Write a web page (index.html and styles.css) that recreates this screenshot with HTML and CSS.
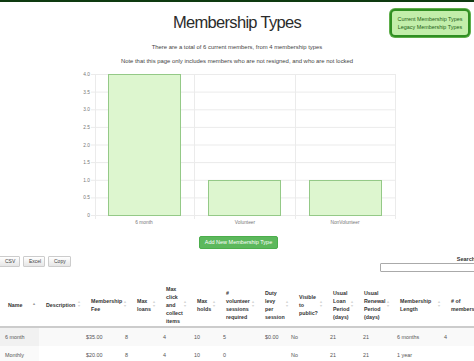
FILE: index.html
```html
<!DOCTYPE html>
<html lang="en">
<head>
    <meta charset="UTF-8">
    <title>Membership Types</title>
    <link rel="stylesheet" href="styles.css">
</head>
<body>
<div class="topbar"></div>

<div class="header">
    <div></div>
    <h1>Membership Types</h1>
    <div class="typebox">
        <a href="#">Current Membership Types</a>
        <a href="#">Legacy Membership Types</a>
    </div>
</div>

<p class="info first">There are a total of 6 current members, from 4 membership types</p>
<p class="info">Note that this page only includes members who are not resigned, and who are not locked</p>

<div class="chart">
    <svg width="474" height="162" viewBox="0 0 474 162">
        <g stroke="#ebebeb" stroke-width="1">
            <line x1="91" y1="6.5" x2="396" y2="6.5"/>
            <line x1="91" y1="24.1" x2="396" y2="24.1"/>
            <line x1="91" y1="41.8" x2="396" y2="41.8"/>
            <line x1="91" y1="59.4" x2="396" y2="59.4"/>
            <line x1="91" y1="77" x2="396" y2="77"/>
            <line x1="91" y1="94.6" x2="396" y2="94.6"/>
            <line x1="91" y1="112.3" x2="396" y2="112.3"/>
            <line x1="91" y1="129.9" x2="396" y2="129.9"/>
            <line x1="91" y1="147.5" x2="396" y2="147.5"/>
            <line x1="95.5" y1="6" x2="95.5" y2="151"/>
            <line x1="194.5" y1="6" x2="194.5" y2="151"/>
            <line x1="295.5" y1="6" x2="295.5" y2="151"/>
            <line x1="395.5" y1="6" x2="395.5" y2="151"/>
        </g>
        <g fill="#ddf6cf" stroke="#94c987" stroke-width="1">
            <rect x="108.5" y="6.5" width="72" height="141"/>
            <rect x="208.5" y="112.5" width="72" height="35"/>
            <rect x="309.5" y="112.5" width="72" height="35"/>
        </g>
        <g class="axis" text-anchor="end">
            <text x="90" y="8">4.0</text>
            <text x="90" y="25.6">3.5</text>
            <text x="90" y="43.3">3.0</text>
            <text x="90" y="60.9">2.5</text>
            <text x="90" y="78.5">2.0</text>
            <text x="90" y="96.1">1.5</text>
            <text x="90" y="113.8">1.0</text>
            <text x="90" y="131.4">0.5</text>
            <text x="90" y="149">0</text>
        </g>
        <g class="axis" text-anchor="middle">
            <text x="144" y="156">6 month</text>
            <text x="245" y="156">Volunteer</text>
            <text x="345" y="156">NonVolunteer</text>
        </g>
    </svg>
</div>

<div class="addrow">
    <a href="#" class="btn-add">Add New Membership Type</a>
</div>

<div class="datatable">
    <div class="controls">
        <div class="exports">
            <span class="dt-btn">CSV</span>
            <span class="dt-btn">Excel</span>
            <span class="dt-btn">Copy</span>
        </div>
        <div class="search">
            <span>Search:</span>
            <input type="text">
        </div>
    </div>

    <table class="head">
        <colgroup>
            <col style="width:38px"><col style="width:45px"><col style="width:46px"><col style="width:29px">
            <col style="width:31px"><col style="width:29px"><col style="width:39px"><col style="width:34px">
            <col style="width:34px"><col style="width:31px"><col style="width:36px"><col style="width:51px">
            <col style="width:57px">
        </colgroup>
        <tr>
            <th class="asc">Name</th>
            <th>Description</th>
            <th>Membership<br>Fee</th>
            <th>Max<br>loans</th>
            <th>Max<br>click<br>and<br>collect<br>items</th>
            <th>Max<br>holds</th>
            <th>#<br>volunteer<br>sessions<br>required</th>
            <th>Duty<br>levy<br>per<br>session</th>
            <th>Visible<br>to<br>public?</th>
            <th>Usual<br>Loan<br>Period<br>(days)</th>
            <th>Usual<br>Renewal<br>Period<br>(days)</th>
            <th>Membership<br>Length</th>
            <th class="nosort"># of<br>members</th>
        </tr>
    </table>

    <table class="body">
        <colgroup>
            <col style="width:39px"><col style="width:42px"><col style="width:39px"><col style="width:38px">
            <col style="width:31px"><col style="width:29px"><col style="width:42px"><col style="width:26px">
            <col style="width:39px"><col style="width:33px"><col style="width:34px"><col style="width:47px">
            <col style="width:61px">
        </colgroup>
        <tr class="odd">
            <td class="sorted">6 month</td><td></td><td>$35.00</td><td>8</td><td>4</td><td>10</td><td>5</td>
            <td>$0.00</td><td>No</td><td>21</td><td>21</td><td>6 months</td><td>4</td>
        </tr>
        <tr class="even">
            <td class="sorted">Monthly</td><td></td><td>$20.00</td><td>8</td><td>4</td><td>10</td><td>0</td>
            <td></td><td>No</td><td>21</td><td>21</td><td>1 year</td><td></td>
        </tr>
    </table>
</div>
</body>
</html>
```

FILE: styles.css
```css
* {
    margin: 0;
    padding: 0;
    box-sizing: border-box;
}

html, body {
    overflow: hidden;
}

body {
    font-family: "Liberation Sans", Arial, sans-serif;
    color: #333;
    background: #fff;
    width: 474px;
}

a {
    text-decoration: none;
}

.topbar {
    height: 2px;
    background: #0e3a10;
}

.header {
    display: grid;
    grid-template-columns: 1fr auto 1fr;
    height: 40px;
    align-items: center;
}

.header h1 {
    font-size: 16.5px;
    font-weight: normal;
    letter-spacing: -0.7px;
    color: #2b2b2b;
}

.typebox {
    justify-self: end;
    align-self: start;
    margin: 7px 4px 0 0;
    width: 80px;
    height: 28px;
    border: 2px solid #2f8f22;
    border-radius: 5px;
    background: #c2eeaa;
    box-shadow: 0 0 0 1px #5fae4b;
    display: flex;
    flex-direction: column;
    align-items: center;
    justify-content: center;
    font-size: 5.4px;
    line-height: 8px;
}

.typebox a {
    color: #1d5e16;
}

.info {
    text-align: center;
    font-size: 5.9px;
    line-height: 10px;
    color: #444;
}

.info + .info {
    margin-top: 4px;
}

.chart {
    margin-top: 2px;
    height: 162px;
}

.chart svg {
    display: block;
}

.axis {
    font-family: "Liberation Sans", Arial, sans-serif;
    font-size: 4.8px;
    fill: #777;
}

.addrow {
    text-align: center;
    margin-top: 0;
    height: 13px;
}

.btn-add {
    display: inline-block;
    width: 79px;
    height: 13px;
    line-height: 11px;
    margin-left: 3px;
    background: #5cb85c;
    border: 1px solid #4cae4c;
    border-radius: 2px;
    color: #fff;
    font-size: 5.5px;
}

.datatable {
    width: 500px;
    margin-top: 13px;
}

.controls {
    display: flex;
    justify-content: space-between;
    align-items: flex-start;
    height: 24px;
}

.exports {
    display: flex;
    gap: 3px;
}

.dt-btn {
    display: inline-block;
    height: 11px;
    line-height: 9px;
    padding: 0 5px;
    border: 1px solid #ccc;
    border-radius: 1px;
    background: linear-gradient(#fff, #e6e6e6);
    font-size: 5px;
    color: #444;
}

.dt-btn:first-child {
    width: 21px;
    margin-left: -1px;
    text-align: center;
}

.exports .dt-btn:nth-child(2) {
    width: 22px;
    text-align: center;
}

.exports .dt-btn:nth-child(3) {
    width: 23px;
    text-align: center;
}

.search {
    display: flex;
    flex-direction: column;
    align-items: flex-end;
    font-size: 5.5px;
    font-weight: bold;
    color: #333;
    width: 120px;
}

.search span {
    line-height: 7px;
    margin-right: 23px;
}

.search input {
    width: 120px;
    height: 9px;
    border: 1px solid #aaa;
    border-radius: 1px;
    background: #fff;
}

table {
    border-collapse: collapse;
    table-layout: fixed;
    width: 500px;
}

.head th {
    position: relative;
    font-size: 5.3px;
    font-weight: bold;
    line-height: 8px;
    text-align: left;
    vertical-align: middle;
    white-space: nowrap;
    padding: 5px 6px 1px 8px;
    height: 47px;
    border-bottom: 2px solid #ccc;
    color: #333;
}

.head th::after {
    content: "\25B4\A\25BE";
    white-space: pre;
    position: absolute;
    right: 3px;
    top: 50%;
    margin-top: -2px;
    font-size: 3.5px;
    line-height: 3.5px;
    color: #d6d6d6;
}

.head th.asc::after {
    content: "\25B4";
    margin-top: 0;
    color: #9a9a9a;
}

.head th.nosort::after {
    content: none;
}

.body td {
    font-size: 5.4px;
    color: #555;
    height: 18px;
    padding: 0 0 0 5px;
    white-space: nowrap;
}

.body tr.odd td {
    background: #f9f9f9;
}

.body tr.odd td.sorted {
    background: #f1f1f1;
}

.body tr.even td.sorted {
    background: #fafafa;
}
```
